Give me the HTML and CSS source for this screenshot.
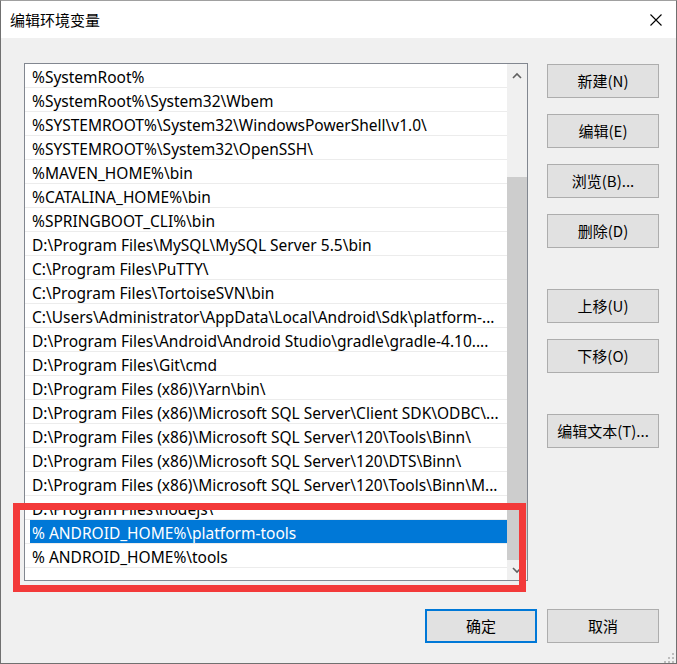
FILE: index.html
```html
<!DOCTYPE html>
<html lang="zh-CN">
<head>
    <meta charset="UTF-8">
    <title>编辑环境变量</title>
    <link rel="stylesheet" href="styles.css">
</head>
<body>

    <div class="window">
        <div class="titlebar">
            <span class="title">编辑环境变量</span>
            <svg class="close" width="12" height="12" viewBox="0 0 12 12">
                <path d="M0.5 0.5 L11.5 11.5 M11.5 0.5 L0.5 11.5" stroke="#000" stroke-width="1.1" fill="none"/>
            </svg>
        </div>

        <div class="content">
            <div class="main">
                <div class="listbox">
                    <div class="rows">
                        <div class="row"><span class="cell">%SystemRoot%</span></div>
                        <div class="row"><span class="cell">%SystemRoot%\System32\Wbem</span></div>
                        <div class="row"><span class="cell">%SYSTEMROOT%\System32\WindowsPowerShell\v1.0\</span></div>
                        <div class="row"><span class="cell">%SYSTEMROOT%\System32\OpenSSH\</span></div>
                        <div class="row"><span class="cell">%MAVEN_HOME%\bin</span></div>
                        <div class="row"><span class="cell">%CATALINA_HOME%\bin</span></div>
                        <div class="row"><span class="cell">%SPRINGBOOT_CLI%\bin</span></div>
                        <div class="row"><span class="cell">D:\Program Files\MySQL\MySQL Server 5.5\bin</span></div>
                        <div class="row"><span class="cell">C:\Program Files\PuTTY\</span></div>
                        <div class="row"><span class="cell">C:\Program Files\TortoiseSVN\bin</span></div>
                        <div class="row"><span class="cell">C:\Users\Administrator\AppData\Local\Android\Sdk\platform-...</span></div>
                        <div class="row"><span class="cell">D:\Program Files\Android\Android Studio\gradle\gradle-4.10....</span></div>
                        <div class="row"><span class="cell">D:\Program Files\Git\cmd</span></div>
                        <div class="row"><span class="cell">D:\Program Files (x86)\Yarn\bin\</span></div>
                        <div class="row"><span class="cell">D:\Program Files (x86)\Microsoft SQL Server\Client SDK\ODBC\...</span></div>
                        <div class="row"><span class="cell">D:\Program Files (x86)\Microsoft SQL Server\120\Tools\Binn\</span></div>
                        <div class="row"><span class="cell">D:\Program Files (x86)\Microsoft SQL Server\120\DTS\Binn\</span></div>
                        <div class="row"><span class="cell">D:\Program Files (x86)\Microsoft SQL Server\120\Tools\Binn\M...</span></div>
                        <div class="row"><span class="cell">D:\Program Files\nodejs\</span></div>
                        <div class="row selected"><span class="cell">% ANDROID_HOME%\platform-tools</span></div>
                        <div class="row"><span class="cell">% ANDROID_HOME%\tools</span></div>
                    </div>
                    <div class="scrollbar">
                        <div class="sb-btn sb-up">
                            <svg width="10" height="7" viewBox="0 0 10 7"><polyline points="1,6 5,2 9,6" fill="none" stroke="#606060" stroke-width="1.6"/></svg>
                        </div>
                        <div class="sb-track"><div class="sb-thumb"></div></div>
                        <div class="sb-btn sb-down">
                            <svg width="10" height="7" viewBox="0 0 10 7"><polyline points="1,1 5,5 9,1" fill="none" stroke="#606060" stroke-width="1.6"/></svg>
                        </div>
                    </div>
                </div>

                <div class="side-buttons">
                    <button class="btn">新建(N)</button>
                    <button class="btn">编辑(E)</button>
                    <button class="btn">浏览(B)...</button>
                    <button class="btn">删除(D)</button>
                    <button class="btn spaced">上移(U)</button>
                    <button class="btn">下移(O)</button>
                    <button class="btn spaced">编辑文本(T)...</button>
                </div>
            </div>

            <div class="footer">
                <button class="btn default">确定</button>
                <button class="btn">取消</button>
            </div>

            <div class="grip-row">
                <svg width="11" height="11" viewBox="0 0 11 11">
                    <rect x="9" y="1" width="2" height="2" fill="#bdbdbd"/>
                    <rect x="5" y="5" width="2" height="2" fill="#bdbdbd"/>
                    <rect x="9" y="5" width="2" height="2" fill="#bdbdbd"/>
                    <rect x="1" y="9" width="2" height="2" fill="#bdbdbd"/>
                    <rect x="5" y="9" width="2" height="2" fill="#bdbdbd"/>
                    <rect x="9" y="9" width="2" height="2" fill="#bdbdbd"/>
                </svg>
            </div>
        </div>

        <!-- annotation box drawn over the last entries -->
        <div class="highlight-box"></div>
    </div>

</body>
</html>
```

FILE: styles.css
```css
html, body {
    margin: 0;
    padding: 0;
    background-color: #fff;
}
body {
    font-family: 'Segoe UI', 'Noto Sans', 'Noto Sans CJK SC', sans-serif;
    font-size: 15px;
    color: #000;
}
.window {
    position: relative;
    width: 677px;
    height: 664px;
    box-sizing: border-box;
    border: 1px solid #707070;
    border-top-color: #a0a0a0;
    display: flex;
    flex-direction: column;
    background-color: #f0f0f0;
}
.titlebar {
    height: 37px;
    flex-shrink: 0;
    background-color: #fff;
    display: flex;
    align-items: center;
    justify-content: space-between;
    padding-left: 9px;
}
.title {
    font-family: 'Noto Sans CJK SC', sans-serif;
    font-size: 15px;
    margin-top: -1px;
}
.close {
    margin-right: 14px;
    margin-top: 1px;
}
.content {
    flex: 1;
    padding: 25px 17px 0 23px;
    display: flex;
    flex-direction: column;
}
.main {
    display: flex;
    gap: 19px;
}

/* list of paths */
.listbox {
    width: 504px;
    height: 518px;
    box-sizing: border-box;
    border: 1px solid #828790;
    background-color: #fff;
    display: flex;
}
.rows {
    flex: 1;
    overflow: hidden;
}
.row {
    display: flex;
    border-bottom: 1px solid #ececec;
}
.cell {
    flex: 1;
    margin-left: 5px;
    padding: 3px 0 0 2px;
    height: 20px;
    line-height: 20px;
    font-size: 15.5px;
    white-space: nowrap;
    overflow: hidden;
}
.row.selected .cell {
    background-color: #0078d7;
    color: #fff;
}
.scrollbar {
    width: 20px;
    flex-shrink: 0;
    background-color: #f0f0f0;
    display: flex;
    flex-direction: column;
}
.sb-btn {
    display: flex;
    align-items: center;
    justify-content: center;
}
.sb-up {
    height: 22px;
}
.sb-down {
    height: 20px;
}
.sb-track {
    flex: 1;
    display: flex;
    flex-direction: column;
}
.sb-thumb {
    flex: 1;
    margin-top: 91px;
    background-color: #cdcdcd;
}

/* buttons */
.btn {
    font-family: 'Noto Sans CJK SC', sans-serif;
    font-size: 15px;
    width: 112px;
    height: 34px;
    box-sizing: border-box;
    padding: 0 0 2px 0;
    border: 1px solid #adadad;
    background-color: #e1e1e1;
    color: #000;
}
.btn.default {
    border: 2px solid #0078d7;
}
.side-buttons {
    display: flex;
    flex-direction: column;
    gap: 16px;
    margin-top: 1px;
}
.side-buttons .spaced {
    margin-top: 25px;
}
.footer {
    display: flex;
    justify-content: flex-end;
    gap: 10px;
    margin-top: 28px;
}
.grip-row {
    display: flex;
    justify-content: flex-end;
    margin-top: 9px;
    margin-right: -15px;
    line-height: 0;
}

.highlight-box {
    position: absolute;
    left: 12px;
    top: 502px;
    width: 513px;
    height: 89px;
    box-sizing: border-box;
    border: 7px solid #f33a3a;
}
```
